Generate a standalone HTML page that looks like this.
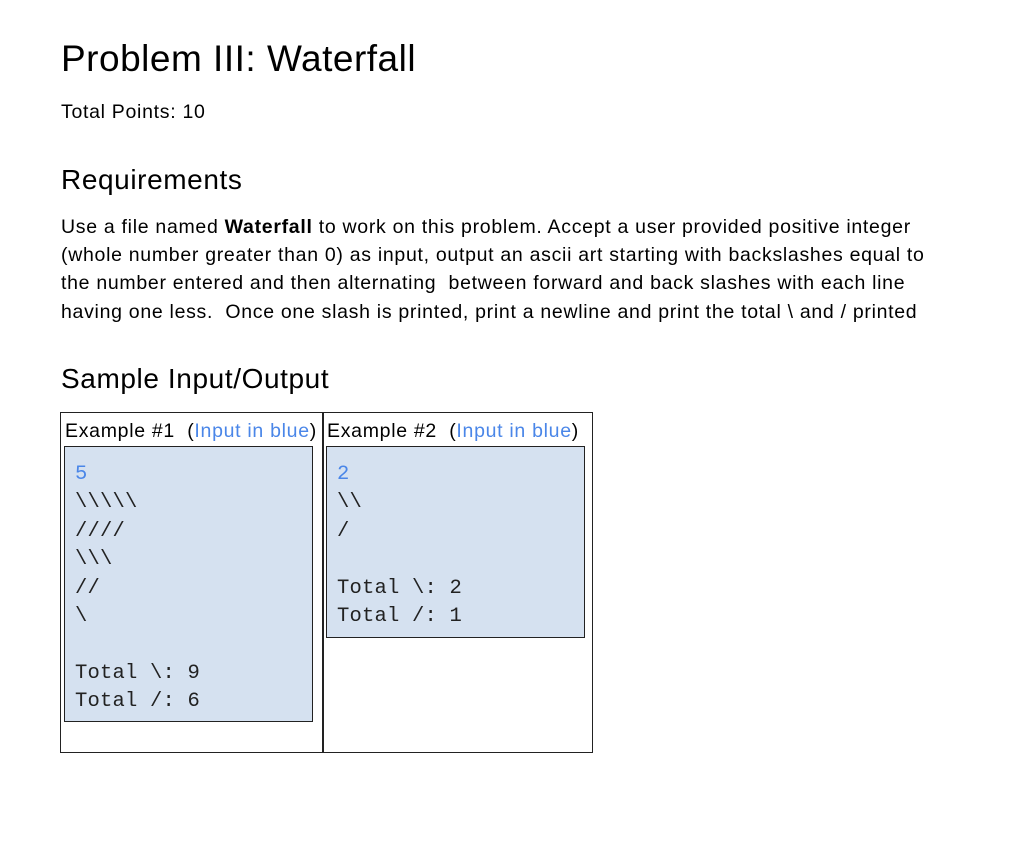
<!DOCTYPE html>
<html><head><meta charset="utf-8"><style>
html,body{margin:0;padding:0;background:#fff;}
body{width:1024px;height:843px;position:relative;overflow:hidden;font-family:"Liberation Sans",Arial,sans-serif;color:#000;}
.a{position:absolute;white-space:nowrap;}
.p{font-size:19.5px;left:61px;letter-spacing:0.7px;}
.mono{font-family:"Liberation Mono","Courier New",monospace;font-size:20.5px;letter-spacing:0.2px;color:#222;}
.b{color:#4a86e8;}
.box{position:absolute;background:#d5e1f0;border:1.5px solid #222;box-sizing:border-box;}
.h{font-size:19.5px;letter-spacing:0.7px;}
</style></head><body>
<div class="a" style="left:840px;top:-17px;font-size:20px;">100 Points</div>
<div class="a" style="left:61px;top:38px;font-size:37px;letter-spacing:0.5px;">Problem III: Waterfall</div>
<div class="a p" style="top:101px;">Total Points: 10</div>
<div class="a" style="left:61px;top:164px;font-size:28px;letter-spacing:0.6px;">Requirements</div>
<div class="a p" style="top:216px;">Use a file named <b>Waterfall</b> to work on this problem. Accept a user provided positive integer</div>
<div class="a p" style="top:244px;">(whole number greater than 0) as input, output an ascii art starting with backslashes equal to</div>
<div class="a p" style="top:272px;">the number entered and then alternating&nbsp; between forward and back slashes with each line</div>
<div class="a p" style="top:301px;">having one less.&nbsp; Once one slash is printed, print a newline and print the total \ and / printed</div>
<div class="a" style="left:61px;top:363px;font-size:28px;letter-spacing:0.6px;">Sample Input/Output</div>

<div style="position:absolute;left:60px;top:412px;width:533px;height:341px;border:1.5px solid #222;box-sizing:border-box;"></div>
<div style="position:absolute;left:322px;top:412px;width:1.5px;height:341px;background:#222;"></div>
<div class="a h" style="left:65px;top:420px;">Example #1&nbsp; (<span class="b">Input in blue</span>)</div>
<div class="a h" style="left:327px;top:420px;">Example #2&nbsp; (<span class="b">Input in blue</span>)</div>

<div class="box" style="left:64px;top:446px;width:249px;height:276px;"></div>
<div class="box" style="left:326px;top:446px;width:259px;height:192px;"></div>

<div class="a mono" style="left:75px;top:461px;line-height:28.4px;"><span class="b">5</span><br>\\\\\<br>////<br>\\\<br>//<br>\<br><br>Total \: 9<br>Total /: 6</div>
<div class="a mono" style="left:337px;top:461px;line-height:28.4px;"><span class="b">2</span><br>\\<br>/<br><br>Total \: 2<br>Total /: 1</div>
</body></html>
